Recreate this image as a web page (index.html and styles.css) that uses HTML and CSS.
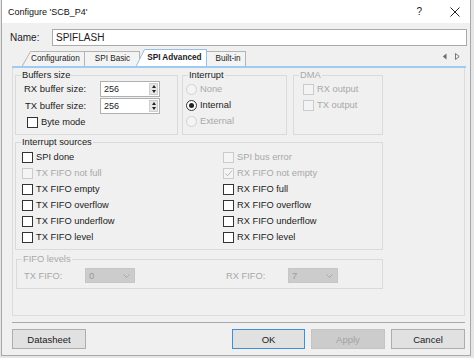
FILE: index.html
```html
<!DOCTYPE html>
<html lang="en">
<head>
  <meta charset="UTF-8" />
  <title>Configure 'SCB_P4'</title>
  <link rel="stylesheet" href="styles.css">
</head>
<body>
  <div class="window">
    <div class="titlebar">
      <span class="title">Configure 'SCB_P4'</span>
      <span class="tb-help">?</span>
      <svg class="tb-close" width="10" height="10" viewBox="0 0 10 10">
        <path d="M0.5 0.5 L9.5 9.5 M9.5 0.5 L0.5 9.5" stroke="#222" stroke-width="1" fill="none"/>
      </svg>
    </div>

    <div class="name-row">
      <span class="name-label">Name:</span>
      <div class="name-input">SPIFLASH</div>
    </div>

    <div class="tabbar">
      <div class="tabs">
        <div class="tab first">
          <svg class="slant" width="9" height="15" viewBox="0 0 9 15">
            <polygon points="0,15 8.5,0.5 9,0.5 9,15" fill="#f3f3f3"/>
            <path d="M0.3 15 L8.5 0.5 L9 0.5" stroke="#b4b4b4" stroke-width="1" fill="none"/>
          </svg>
          <span class="tab-label">Configuration</span>
        </div>
        <div class="tab">
          <span class="tab-label plain">SPI Basic</span>
        </div>
        <div class="tab active">
          <svg class="slant" width="9" height="17" viewBox="0 0 9 17">
            <polygon points="0,17 8.5,0.5 9,0.5 9,17" fill="#fff"/>
            <path d="M0.3 17 L8.5 0.5 L9 0.5" stroke="#95bfe6" stroke-width="1" fill="none"/>
          </svg>
          <span class="tab-label">SPI Advanced</span>
        </div>
        <div class="tab">
          <span class="tab-label plain last">Built-in</span>
        </div>
      </div>
      <div class="tab-arrows">
        <svg width="18" height="7" viewBox="0 0 18 7">
          <polygon points="4.5,0.5 4.5,6.5 0.8,3.5" fill="#6a6a6a"/>
          <polygon points="13.5,0.5 13.5,6.5 17.2,3.5" fill="none" stroke="#6a6a6a" stroke-width="0.9"/>
        </svg>
      </div>
    </div>

    <div class="tabpage">
      <div class="top-row">
        <fieldset class="group g-buffers">
          <legend>Buffers size</legend>
          <div class="buf-row">
            <span class="buf-label">RX buffer size:</span>
            <div class="spin-input">
              <span class="spin-val">256</span>
              <span class="spin"><span class="up"></span><span class="down"></span></span>
            </div>
          </div>
          <div class="buf-row">
            <span class="buf-label tx">TX buffer size:</span>
            <div class="spin-input">
              <span class="spin-val">256</span>
              <span class="spin"><span class="up"></span><span class="down"></span></span>
            </div>
          </div>
          <div class="check byte-mode"><span class="box"></span>Byte mode</div>
        </fieldset>

        <fieldset class="group g-interrupt">
          <legend>Interrupt</legend>
          <div class="radio disabled"><span class="dot"></span>None</div>
          <div class="radio checked"><span class="dot"></span>Internal</div>
          <div class="radio disabled"><span class="dot"></span>External</div>
        </fieldset>

        <fieldset class="group g-dma disabled">
          <legend>DMA</legend>
          <div class="check disabled"><span class="box"></span>RX output</div>
          <div class="check disabled"><span class="box"></span>TX output</div>
        </fieldset>
      </div>

      <fieldset class="group g-sources">
        <legend>Interrupt sources</legend>
        <div class="source-grid">
          <div class="check"><span class="box"></span>SPI done</div>
          <div class="check disabled"><span class="box"></span>SPI bus error</div>
          <div class="check disabled"><span class="box"></span>TX FIFO not full</div>
          <div class="check disabled"><span class="box">
            <svg width="9" height="9" viewBox="0 0 9 9"><path d="M1.5 4.5 L3.5 6.8 L7.8 1.8" stroke="#b9b9b9" stroke-width="1" fill="none"/></svg>
          </span>RX FIFO not empty</div>
          <div class="check"><span class="box"></span>TX FIFO empty</div>
          <div class="check"><span class="box"></span>RX FIFO full</div>
          <div class="check"><span class="box"></span>TX FIFO overflow</div>
          <div class="check"><span class="box"></span>RX FIFO overflow</div>
          <div class="check"><span class="box"></span>TX FIFO underflow</div>
          <div class="check"><span class="box"></span>RX FIFO underflow</div>
          <div class="check"><span class="box"></span>TX FIFO level</div>
          <div class="check"><span class="box"></span>RX FIFO level</div>
        </div>
      </fieldset>

      <fieldset class="group g-fifo disabled">
        <legend>FIFO levels</legend>
        <div class="fifo-row">
          <span class="fifo-label">TX FIFO:</span>
          <div class="combo">
            <span>0</span>
            <svg width="7" height="4" viewBox="0 0 7 4"><path d="M0.5 0.5 L3.5 3.5 L6.5 0.5" stroke="#a8a8a8" fill="none"/></svg>
          </div>
          <span class="fifo-label rx">RX FIFO:</span>
          <div class="combo">
            <span>7</span>
            <svg width="7" height="4" viewBox="0 0 7 4"><path d="M0.5 0.5 L3.5 3.5 L6.5 0.5" stroke="#a8a8a8" fill="none"/></svg>
          </div>
        </div>
      </fieldset>
    </div>

    <div class="separator"></div>

    <div class="buttons">
      <button class="btn" type="button">Datasheet</button>
      <span class="spacer"></span>
      <button class="btn default" type="button">OK</button>
      <button class="btn" type="button" disabled>Apply</button>
      <button class="btn" type="button">Cancel</button>
    </div>
  </div>
</body>
</html>
```

FILE: styles.css
```css
* {
  box-sizing: border-box;
}

body {
  margin: 0;
  background: #e6e6e6;
  font-family: "Liberation Sans", Arial, sans-serif;
  font-size: 9.5px;
  color: #1b1b1b;
}

.window {
  margin-left: 1px;
  width: 470px;
  height: 356px;
  border: 1px solid #a8a8a8;
  border-top: none;
  background: #f0f0f0;
  display: flex;
  flex-direction: column;
}

/* title bar */
.titlebar {
  height: 23px;
  background: #fff;
  display: flex;
  align-items: center;
  padding: 0 10px 0 6px;
}

.title {
  flex: 1;
  font-size: 9px;
  color: #111;
}

.tb-help {
  font-size: 10px;
  margin-right: 28px;
  color: #222;
}

/* name */
.name-row {
  display: flex;
  align-items: center;
  height: 17px;
  margin: 6px 3px 0 8px;
}

.name-label {
  width: 42px;
  font-size: 10px;
}

.name-input {
  flex: 1;
  height: 17px;
  border: 1px solid #aaaaaa;
  background: #fff;
  padding-left: 3px;
  line-height: 15px;
  font-size: 10px;
}

/* tabs */
.tabbar {
  height: 19px;
  margin: 3px 4px 0 10px;
  display: flex;
  align-items: flex-end;
  border-bottom: 2px solid #9fcbf0;
}

.tabs {
  flex: 1;
  display: flex;
  align-items: flex-end;
  padding-left: 10px;
}

.tab {
  display: flex;
  align-items: flex-end;
  position: relative;
}

.tab .slant {
  display: block;
}

.tab-label {
  height: 15px;
  line-height: 14px;
  padding: 0 4px 0 0;
  background: #f3f3f3;
  border-top: 1px solid #b4b4b4;
  border-right: 1px solid #b4b4b4;
  font-size: 8.2px;
}

.tab-label.plain {
  padding: 0 9px 0 10px;
}

.tab-label.last {
  padding: 0 4px 0 9px;
}

.tab.active {
  margin-left: -4px;
  z-index: 1;
}

.tab.active .tab-label {
  height: 17px;
  line-height: 16px;
  background: #fff;
  border-color: #95bfe6;
  font-weight: bold;
  padding: 0 4px 0 2px;
}

.tab-arrows {
  margin: 0 6px 6px 0;
  display: flex;
}

/* tab page */
.tabpage {
  height: 248px;
  margin: 0 5px 0 10px;
  border: 1px solid #dcdcdc;
  border-top: none;
  padding-left: 2px;
}

.top-row {
  display: flex;
  margin-top: 1px;
}

.group {
  margin: 0;
  padding: 0;
  min-width: 0;
  border: 1px solid #dadada;
}

.group legend {
  margin-left: 5px;
  padding: 0 1px;
  line-height: 12px;
  font-size: 9.3px;
}

.group.disabled legend {
  color: #a8a8a8;
}

.g-buffers {
  width: 163px;
  height: 66px;
  margin-right: 4px;
}

.g-interrupt {
  width: 105px;
  height: 66px;
  margin-right: 6px;
}

.g-dma {
  width: 90px;
  height: 66px;
}

.buf-row {
  display: flex;
  align-items: center;
  height: 17px;
  padding-left: 8px;
}

.buf-row:first-of-type {
  margin-top: -1px;
}

.buf-label {
  width: 76px;
  font-size: 9.5px;
}

.buf-label.tx {
  padding-left: 1px;
}

.spin-input {
  width: 60px;
  height: 16px;
  border: 1px solid #b0b0b0;
  background: #fff;
  display: flex;
  align-items: center;
  justify-content: space-between;
  padding: 0 1px 0 3px;
}

.spin-val {
  font-size: 9px;
}

.spin {
  width: 9px;
  height: 12px;
  display: flex;
  flex-direction: column;
  justify-content: space-between;
  background: #e6e6e6;
  border: 1px solid #cfcfcf;
  padding: 1px 0;
  align-items: center;
}

.spin .up {
  border-left: 2.5px solid transparent;
  border-right: 2.5px solid transparent;
  border-bottom: 3px solid #222;
}

.spin .down {
  border-left: 2.5px solid transparent;
  border-right: 2.5px solid transparent;
  border-top: 3px solid #222;
}

/* checkboxes and radios */
.check,
.radio {
  display: flex;
  align-items: center;
  height: 16px;
  font-size: 9.3px;
  white-space: nowrap;
}

.check .box {
  width: 11px;
  height: 11px;
  border: 1px solid #333;
  background: #fff;
  margin-right: 3px;
  display: flex;
  align-items: center;
  justify-content: center;
}

.check.disabled,
.radio.disabled {
  color: #a8a8a8;
}

.check.disabled .box {
  border-color: #cbcbcb;
  background: #f4f4f4;
}

.byte-mode {
  margin-left: 11px;
  height: 16px;
}

.radio {
  margin-left: 3px;
}

.radio .dot {
  width: 11px;
  height: 11px;
  border: 1px solid #333;
  border-radius: 50%;
  background: #fff;
  margin-right: 3px;
  display: flex;
  align-items: center;
  justify-content: center;
}

.radio.disabled .dot {
  border-color: #d2d2d2;
  background: #f4f4f4;
}

.radio.checked .dot::after {
  content: "";
  width: 5px;
  height: 5px;
  border-radius: 50%;
  background: #222;
}

.g-dma .check {
  margin-left: 9px;
}

/* interrupt sources */
.g-sources {
  width: 368px;
  margin-top: 1px;
  padding-bottom: 4px;
}

.source-grid {
  display: grid;
  grid-template-columns: 201px 1fr;
  padding-left: 6px;
  margin-top: 1px;
}

/* fifo levels */
.g-fifo {
  width: 367px;
  margin: 3px 0 0 1px;
  padding-bottom: 5px;
}

.fifo-row {
  display: flex;
  align-items: center;
  padding-left: 7px;
  margin-top: 3px;
}

.fifo-label {
  width: 61px;
  color: #a8a8a8;
  font-size: 9.3px;
}

.fifo-label.rx {
  width: 62px;
  margin-left: 91px;
}

.combo {
  width: 50px;
  height: 15px;
  background: #cccccc;
  border: 1px solid #c6c6c6;
  display: flex;
  align-items: center;
  justify-content: space-between;
  padding: 0 4px 0 3px;
  color: #9a9a9a;
  font-size: 9.5px;
}

/* footer */
.separator {
  height: 1px;
  margin: 6px 5px 0 10px;
  background: #a9a9a9;
}

.buttons {
  display: flex;
  gap: 6px;
  margin: 6px 5px 0 10px;
}

.spacer {
  flex: 1;
}

.btn {
  width: 74px;
  height: 20px;
  border: 1px solid #adadad;
  background: #e1e1e1;
  font-family: "Liberation Sans", Arial, sans-serif;
  font-size: 9.5px;
  color: #1b1b1b;
  padding: 0;
}

.btn.default {
  width: 73px;
  border-color: #3c8fd8;
}

.btn:disabled {
  background: #cccccc;
  border-color: #c4c4c4;
  color: #a3a3a3;
}
```
